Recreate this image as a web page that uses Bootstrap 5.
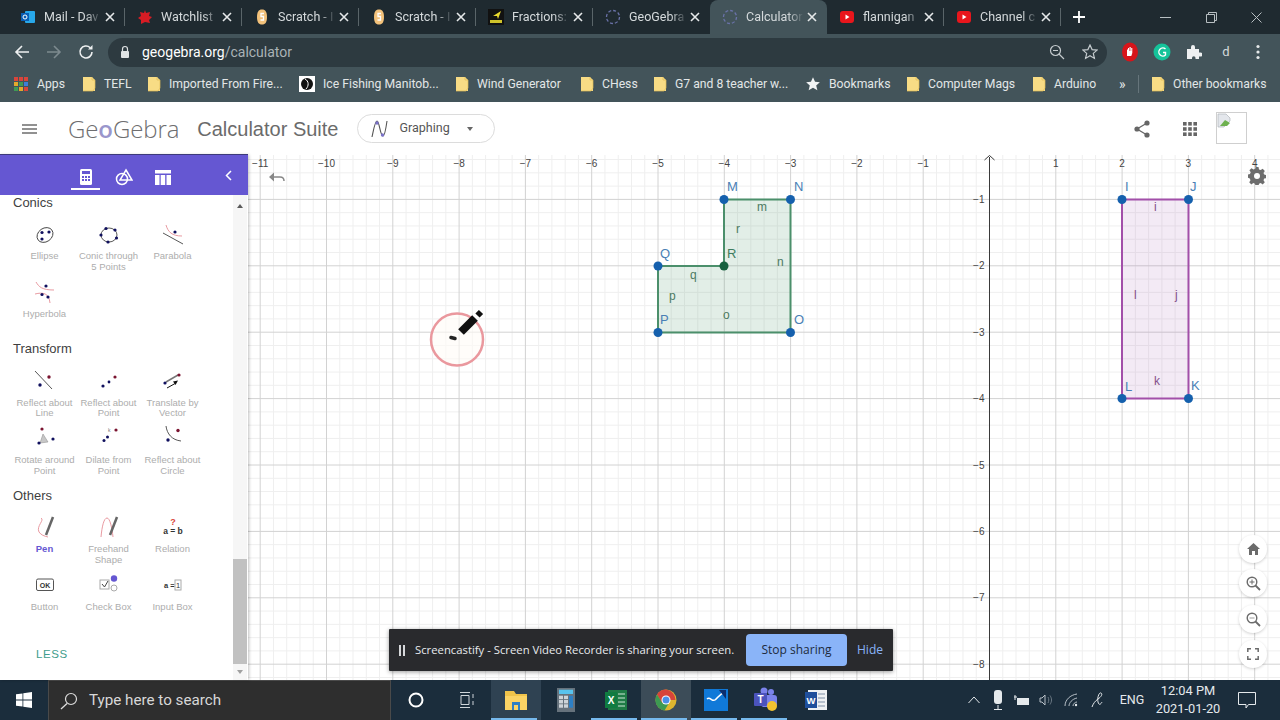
<!DOCTYPE html>
<html lang="en">
<head>
<meta charset="UTF-8">
<title>GeoGebra Calculator Suite</title>
<link rel="stylesheet" href="https://cdn.jsdelivr.net/npm/bootstrap@5.3.0/dist/css/bootstrap.min.css">
<style>
html, body { margin: 0; height: 720px; overflow: hidden; background: #fff; }
body { font-family: Roboto, "Liberation Sans", sans-serif; width: 1280px; }
/* browser chrome */
.tab-strip { height: 34px; background: #1f2a30; padding-left: 8px; }
.tab-cell { width: 117px; flex: none; height: 34px; padding-left: 12px; color: #d5dadc; font-size: 12.5px; border-radius: 8px 8px 0 0; position: relative; }
.tab-cell.is-active { background: #43545a; }
.tab-cell.has-sep::after { content: ""; position: absolute; right: 0; top: 8px; height: 18px; width: 1px; background: #5a6569; }
.tab-fav { width: 16px; height: 16px; flex: none; display: block; }
.tab-title { width: 58px; margin-left: 8px; white-space: nowrap; overflow: hidden; -webkit-mask-image: linear-gradient(to right, #000 72%, transparent); mask-image: linear-gradient(to right, #000 72%, transparent); }
.tab-x { width: 10px; height: 10px; margin-left: 3px; flex: none; }
.new-tab { margin-left: 11px; flex: none; }
.win-btns { margin-left: auto; width: 102px; margin-right: 18px; }
.addr-row { height: 36px; background: #43545a; padding-left: 13px; }
.nav-ico { width: 18px; height: 18px; flex: none; }
.nav-ico + .nav-ico { margin-left: 14px; }
.addr-pill { width: 999px; height: 29px; background: #2d3a40; border-radius: 15px; margin-left: 13px; padding: 0 9px 0 11px; color: #fff; font-size: 14px; flex: none; }
.addr-pill span { color: #aab3b7; }
.addr-text { margin-left: 11px; }
.star-ico { margin-left: 17px; }
.ext-row { margin-left: 7px; display: grid; grid-template-columns: repeat(5, 32px); justify-items: center; align-items: center; color: #d5dadc; font-size: 13px; }
.marks-row { height: 32px; background: #43545a; color: #e2e6e7; font-size: 12.2px; padding: 0 0 4px 13px; white-space: nowrap; display: grid; grid-template-columns: 67px 65px 154px 154px 125px 73px 154px 99px 126px 85px 23px 11px 1fr; align-items: center; }
.mark-item { gap: 8px; height: 16px; line-height: 16px; }
.mark-item svg { flex: none; }
.mark-more { font-size: 14px; padding-left: 4px; }
.mark-sep { width: 1px; height: 18px; background: #66757b; }
/* geogebra header */
.gg-head { height: 53px; background: #fff; color: #666; }
.gg-burger { margin-left: 22px; flex: none; }
.gg-logo { font-family: "Open Sans", Roboto, sans-serif; font-weight: 300; font-size: 24px; color: #6e6e70; margin-left: 31px; letter-spacing: -.1px; line-height: 1; }
.gg-logo b { font-weight: 600; color: #9a96cc; }
.gg-suite { font-family: "Liberation Sans", sans-serif; font-size: 20px; color: #6b6b6b; margin-left: 18px; }
.mode-pill { width: 138px; height: 29px; margin-left: 19px; border: 1px solid #dcdcdc; border-radius: 15px; font-size: 12.5px; color: #555; padding: 0 0 0 13px; background: #fff; }
.mode-label { margin-left: 10px; }
.mode-caret { width: 0; height: 0; border: 3.5px solid transparent; border-top: 4px solid #666; border-bottom: 0; margin-left: 17px; }
.grid-ico { margin-left: 33px; }
.broken-box { width: 31px; height: 32px; border: 1px solid #cfcfcf; margin-left: 19px; margin-right: 33px; margin-top: -2px; }
/* app area */
.app-main { height: 525px; }
.side-panel { width: 248px; flex: none; background: #fff; box-shadow: 1px 0 3px rgba(0,0,0,.25); z-index: 2; }
.side-tabs { height: 40px; background: #6557d2; box-shadow: 0 -1px 0 #3d3a7a; padding-left: 71px; padding-right: 16px; flex: none; }
.side-tab { width: 29px; height: 40px; padding-top: 4px; position: relative; }
.side-tab + .side-tab { margin-left: 9.5px; }
.side-tab.is-on::after { content: ""; position: absolute; left: 0; right: 0; bottom: 5px; height: 2px; background: #fff; }
.side-back { margin-left: auto; padding-top: 1px; }
.side-body { height: 485px; }
.tool-scroll { width: 233px; overflow: hidden; padding-left: 12.5px; }
.tool-head { font-family: "Liberation Sans", sans-serif; font-size: 13px; line-height: 18px; height: 18px; color: #3f3f3f; margin: 4px 0 9.5px .5px; }
.tool-head.first { margin-top: -1.5px; }
.tool-grid { display: grid; grid-template-columns: repeat(3, 64px); grid-auto-rows: 57.5px; }
.tool-cell { text-align: center; font-family: "Liberation Sans", sans-serif; font-size: 9.5px; line-height: 10.7px; color: #adadad; }
.tool-cell svg { display: block; margin: 0 auto 2px; width: 32px; height: 28px; }
.tool-cell svg text { font-family: "Liberation Sans", sans-serif; }
.tool-cell.is-on { color: #6557d2; font-weight: 700; }
.less-link { font-family: "Liberation Sans", sans-serif; font-size: 11.5px; letter-spacing: .6px; color: #3f9d8c; margin: 17.5px 0 0 23.5px; line-height: 14px; }
.scroll-rail { width: 14px; background: #f6f6f6; position: relative; }
.scroll-thumb { position: absolute; top: 364px; left: 0; right: 0; height: 105px; background: #c1c1c1; }
.rail-up, .rail-down { position: absolute; left: 4px; width: 0; height: 0; border: 3.5px solid transparent; }
.rail-up { top: 9px; border-bottom: 4px solid #5a5a5a; border-top: 0; }
.rail-down { bottom: 6px; border-top: 4px solid #a0a0a0; border-bottom: 0; }
.graph-area { position: relative; flex: 1 1 auto; background: #fff; }
.graph-svg { display: block; width: 1032px; height: 525px; }
.graph-svg text { font-family: "Liberation Sans", sans-serif; }
.axis-num { font-size: 10px; fill: #444; }
.pt-name { font-size: 13px; fill: #4a7fb5; }
.pt-inner { fill: #3f7d60; }
.seg-green { font-size: 12px; fill: #4d7a62; }
.seg-purple { font-size: 12px; fill: #84508a; }
.undo-ico { position: absolute; left: 20px; top: 16px; }
.gear-ico { position: absolute; left: 1000px; top: 12px; }
.float-btn { position: absolute; left: 991px; width: 28px; height: 28px; border-radius: 50%; background: #fff; box-shadow: 0 1px 3px rgba(0,0,0,.18); }
.fb-home { top: 380px; }
.fb-in { top: 414px; }
.fb-out { top: 450px; }
.fb-full { top: 485px; }
.share-bar { position: absolute; left: 141px; top: 474px; width: 504px; height: 42px; background: #292a2d; color: #e8eaed; font-family: "Open Sans", Roboto, sans-serif; font-size: 11.3px; box-shadow: 0 1px 4px rgba(0,0,0,.4); border-radius: 1px; padding-left: 10px; }
.share-msg { margin-left: 10px; width: 321px; white-space: nowrap; }
.share-stop { width: 101px; height: 32px; background: #8ab4f8; color: #202b3d; border: 0; border-radius: 4px; padding: 0; margin-left: 10px; font-size: 12px; font-weight: 500; font-family: inherit; }
.share-hide { color: #8ab4f8; margin-left: 10px; font-size: 12px; }
/* taskbar */
.task-bar { height: 40px; background: #1b2d3c; color: #e5e9ec; }
.task-start { width: 48px; padding-right: 0; }
.task-search { width: 343px; height: 40px; background: #2e2e2e; border: 1px solid #4a4a4a; border-bottom: 0; color: #d8d8d8; font-size: 15.2px; padding-left: 11px; }
.task-search span { margin-left: 11px; }
.task-slot { width: 50px; height: 40px; position: relative; flex: none; }
.task-slot.is-open::after { content: ""; position: absolute; left: 0; right: 4px; bottom: 0; height: 2px; background: #76b9ed; }
.task-slot.is-open.is-lit { background: #2f4252; }
.task-slot.is-here { background: #3c4c58; }
.tray-area { margin-left: auto; padding-right: 12px; }
.tray-ico { width: 24px; height: 40px; flex: none; }
.tray-ico.wide { width: 26.5px; }
.tray-lang { width: 39px; padding-left: 3px; text-align: center; font-size: 12.5px; }
.tray-time { width: 76px; text-align: center; font-size: 12.8px; line-height: 18px; }
.tray-note { width: 42px; height: 40px; }
</style>
</head>
<body>
<svg width="0" height="0" class="position-absolute">
  <symbol id="ico-x" viewBox="0 0 10 10"><path d="M1 1l8 8M9 1l-8 8" stroke="#e6e9ea" stroke-width="1.6"/></symbol>
  <symbol id="ico-folder" viewBox="0 0 16 16"><path d="M3 1h9l3 3v11H3z" fill="#f8dc85"/><path d="M12 1v3h3v8l-2 3H3" fill="none" stroke="#e2bd58" stroke-width=".7"/></symbol>
  <symbol id="ico-yt" viewBox="0 0 16 16"><rect x="1" y="2" width="14" height="12" rx="3" fill="#e8161c"/><path d="M6.5 5.5l4 2.5-4 2.5z" fill="#fff"/></symbol>
  <symbol id="ico-scratch" viewBox="0 0 16 16"><path d="M8 .5c3.5 0 5 2.5 5 7.5s-1.500 7.500-5 7.500S3 13 3 8 4.500.5 8 .5z" fill="#f3c27b"/><path d="M10 4.500H7v3h2.500v3.500H6.500" fill="none" stroke="#fff" stroke-width="1.300"/></symbol>
  <symbol id="ico-gg" viewBox="0 0 16 16"><circle cx="8" cy="8" r="6.500" fill="none" stroke="#6a72a8" stroke-width="1.300" stroke-dasharray="3 2"/></symbol>
</svg>

<!-- Tabs -->
<div class="tab-strip d-flex align-items-center">
  <div class="tab-cell has-sep d-flex align-items-center"><svg class="tab-fav" viewBox="0 0 16 16"><rect x="5" y="2" width="10" height="12" rx="1" fill="#28a8ea"/><rect x="1" y="4" width="8" height="8" fill="#0a5fb4"/><circle cx="5" cy="8" r="2" fill="none" stroke="#fff"/></svg><div class="tab-title">Mail - Dav</div><svg class="tab-x"><use href="#ico-x"/></svg></div>
  <div class="tab-cell has-sep d-flex align-items-center"><svg class="tab-fav" viewBox="0 0 16 16"><path d="M8 1l1 3 4-1-1 4 3 1-3 3 1 3-5-1-4 2 0-4-3-2 3-2-1-4 4 1z" fill="#d81c24"/></svg><div class="tab-title">Watchlist</div><svg class="tab-x"><use href="#ico-x"/></svg></div>
  <div class="tab-cell has-sep d-flex align-items-center"><svg class="tab-fav"><use href="#ico-scratch"/></svg><div class="tab-title">Scratch - I</div><svg class="tab-x"><use href="#ico-x"/></svg></div>
  <div class="tab-cell has-sep d-flex align-items-center"><svg class="tab-fav"><use href="#ico-scratch"/></svg><div class="tab-title">Scratch - I</div><svg class="tab-x"><use href="#ico-x"/></svg></div>
  <div class="tab-cell has-sep d-flex align-items-center"><svg class="tab-fav" viewBox="0 0 16 16"><rect width="16" height="16" fill="#111"/><path d="M5 7l8-5-3 8-1-3z" fill="#e8d92e"/><rect x="2" y="11" width="12" height="3" fill="#cfc32a"/></svg><div class="tab-title">Fractions:</div><svg class="tab-x"><use href="#ico-x"/></svg></div>
  <div class="tab-cell d-flex align-items-center"><svg class="tab-fav"><use href="#ico-gg"/></svg><div class="tab-title">GeoGebra</div><svg class="tab-x"><use href="#ico-x"/></svg></div>
  <div class="tab-cell is-active d-flex align-items-center"><svg class="tab-fav"><use href="#ico-gg"/></svg><div class="tab-title">Calculator</div><svg class="tab-x"><use href="#ico-x"/></svg></div>
  <div class="tab-cell has-sep d-flex align-items-center"><svg class="tab-fav"><use href="#ico-yt"/></svg><div class="tab-title">flannigan</div><svg class="tab-x"><use href="#ico-x"/></svg></div>
  <div class="tab-cell has-sep d-flex align-items-center"><svg class="tab-fav"><use href="#ico-yt"/></svg><div class="tab-title">Channel c</div><svg class="tab-x"><use href="#ico-x"/></svg></div>
  <svg class="new-tab" width="14" height="14" viewBox="0 0 14 14"><path d="M7 1v12M1 7h12" stroke="#fff" stroke-width="1.800"/></svg>
  <div class="win-btns d-flex justify-content-between align-items-center">
    <svg width="11" height="11" viewBox="0 0 11 11"><path d="M0 5.500h11" stroke="#b8bfc2"/></svg>
    <svg width="11" height="11" viewBox="0 0 11 11"><path d="M.5 2.500h8v8h-8zM2.500 2.500v-2h8v8h-2" fill="none" stroke="#b8bfc2"/></svg>
    <svg width="11" height="11" viewBox="0 0 11 11"><path d="M.5.500l10 10M10.500.500l-10 10" stroke="#b8bfc2"/></svg>
  </div>
</div>

<!-- Address bar -->
<div class="addr-row d-flex align-items-center">
  <svg class="nav-ico" viewBox="0 0 18 18"><path d="M16 9H3M9 3L3 9l6 6" fill="none" stroke="#eef0f1" stroke-width="1.600"/></svg>
  <svg class="nav-ico" viewBox="0 0 18 18"><path d="M2 9h13M9 3l6 6-6 6" fill="none" stroke="#7d8a8f" stroke-width="1.600"/></svg>
  <svg class="nav-ico" viewBox="0 0 18 18"><path d="M15 9a6 6 0 1 1-1.800-4.300" fill="none" stroke="#eef0f1" stroke-width="1.600"/><path d="M15.500 2v4.500H11z" fill="#eef0f1"/></svg>
  <div class="addr-pill d-flex align-items-center">
    <svg width="12" height="14" viewBox="0 0 12 14"><rect x="2" y="6" width="8" height="7" rx="1" fill="#dfe3e4"/><path d="M3.500 6V4a2.500 2.500 0 0 1 5 0v2" fill="none" stroke="#dfe3e4" stroke-width="1.200"/></svg>
    <div class="addr-text flex-grow-1">geogebra.org<span>/calculator</span></div>
    <svg width="16" height="16" viewBox="0 0 16 16"><circle cx="6.500" cy="6.500" r="5" fill="none" stroke="#c5cbce" stroke-width="1.200"/><path d="M10 10l5 5M4 6.500h5" stroke="#c5cbce" stroke-width="1.200"/></svg>
    <svg class="star-ico" width="16" height="16" viewBox="0 0 16 16"><path d="M8 1l2.100 4.600 5 .5-3.800 3.300 1.100 5L8 11.800l-4.400 2.600 1.100-5L.9 6.100l5-.5z" fill="none" stroke="#c5cbce" stroke-width="1.200"/></svg>
  </div>
  <div class="ext-row">
    <svg width="18" height="20" viewBox="0 0 18 20"><ellipse cx="9" cy="10" rx="8" ry="9.500" fill="#d7141a"/><path d="M6 14V7.500h1V6h1v3h.5V5h1.200v4h.5V6h1.100v5l-1 3z" fill="#fff"/></svg>
    <svg width="18" height="18" viewBox="0 0 18 18"><circle cx="9" cy="9" r="8.500" fill="#15c39a"/><path d="M12.500 6a4 4 0 1 0 0 6V9.500H10" fill="none" stroke="#fff" stroke-width="1.400"/></svg>
    <svg width="16" height="16" viewBox="0 0 16 16"><path d="M1 5h4V3a2 2 0 0 1 4 0v2h4v3.500h1.500a2 2 0 0 1 0 4H13V15H9.500v-1a1.700 1.700 0 0 0-3.500 0v1H1z" fill="#eef0f1"/></svg>
    <span>d</span>
    <svg width="4" height="16" viewBox="0 0 4 16"><circle cx="2" cy="2.500" r="1.600" fill="#e6e9ea"/><circle cx="2" cy="8" r="1.600" fill="#e6e9ea"/><circle cx="2" cy="13.500" r="1.600" fill="#e6e9ea"/></svg>
  </div>
</div>

<!-- Bookmarks -->
<div class="marks-row">
  <div class="mark-item d-flex"><svg width="16" height="16" viewBox="-1 -1 16 16"><rect width="4" height="4" fill="#d9453b"/><rect x="5" width="4" height="4" fill="#d9453b"/><rect x="10" width="4" height="4" fill="#d9453b"/><rect y="5" width="4" height="4" fill="#e3a92c"/><rect x="5" y="5" width="4" height="4" fill="#3f9a55"/><rect x="10" y="5" width="4" height="4" fill="#3e7fd8"/><rect y="10" width="4" height="4" fill="#3f9a55"/><rect x="5" y="10" width="4" height="4" fill="#e3a92c"/><rect x="10" y="10" width="4" height="4" fill="#d9453b"/></svg>Apps</div>
  <div class="mark-item d-flex"><svg width="16" height="16"><use href="#ico-folder"/></svg>TEFL</div>
  <div class="mark-item d-flex"><svg width="16" height="16"><use href="#ico-folder"/></svg>Imported From Fire...</div>
  <div class="mark-item d-flex"><svg width="16" height="16" viewBox="0 0 16 16"><rect width="16" height="16" fill="#fff"/><circle cx="8" cy="8" r="6" fill="#111"/><path d="M6 3c4 2 4 7 1 10" stroke="#fff" fill="none"/></svg>Ice Fishing Manitob...</div>
  <div class="mark-item d-flex"><svg width="16" height="16"><use href="#ico-folder"/></svg>Wind Generator</div>
  <div class="mark-item d-flex"><svg width="16" height="16"><use href="#ico-folder"/></svg>CHess</div>
  <div class="mark-item d-flex"><svg width="16" height="16"><use href="#ico-folder"/></svg>G7 and 8 teacher w...</div>
  <div class="mark-item d-flex"><svg width="16" height="16" viewBox="-1 -1 18 18"><path d="M8 .5l2.300 5 5.400.5-4.100 3.600 1.300 5.400L8 12.200 3.100 15l1.300-5.400L.3 6l5.400-.5z" fill="#f2f4f5"/></svg>Bookmarks</div>
  <div class="mark-item d-flex"><svg width="16" height="16"><use href="#ico-folder"/></svg>Computer Mags</div>
  <div class="mark-item d-flex"><svg width="16" height="16"><use href="#ico-folder"/></svg>Arduino</div>
  <div class="mark-more">&raquo;</div>
  <div class="mark-sep"></div>
  <div class="mark-item d-flex"><svg width="16" height="16"><use href="#ico-folder"/></svg>Other bookmarks</div>
</div>

<!-- GeoGebra header -->
<div class="gg-head d-flex align-items-center">
  <svg class="gg-burger" width="15" height="10" viewBox="0 0 15 10"><path d="M0 1h15M0 5h15M0 9h15" stroke="#6d6d6d" stroke-width="1.400"/></svg>
  <div class="gg-logo">Ge<b>o</b>Gebra</div>
  <div class="gg-suite">Calculator Suite</div>
  <button class="mode-pill d-flex align-items-center" type="button">
    <svg width="18" height="20" viewBox="0 0 18 20"><path d="M1 18C3 9 4 2 6 2c2.500 0 3 15 6 15 1.500 0 3-8 4-15" fill="none" stroke="#555" stroke-width="1.100"/><circle cx="6" cy="4" r="1.700" fill="#7a72c8"/><circle cx="11.500" cy="16" r="1.700" fill="#7a72c8"/></svg>
    <span class="mode-label">Graphing</span>
    <span class="mode-caret"></span>
  </button>
  <div class="ms-auto d-flex align-items-center">
    <svg width="16" height="18" viewBox="0 0 16 18"><path d="M13 3L3 9l10 6" fill="none" stroke="#666" stroke-width="1.300"/><circle cx="13" cy="3" r="2.600" fill="#666"/><circle cx="3" cy="9" r="2.600" fill="#666"/><circle cx="13" cy="15" r="2.600" fill="#666"/></svg>
    <svg class="grid-ico" width="14" height="14" viewBox="0 0 14 14" fill="#666"><rect width="3.600" height="3.600"/><rect x="5.200" width="3.600" height="3.600"/><rect x="10.400" width="3.600" height="3.600"/><rect y="5.200" width="3.600" height="3.600"/><rect x="5.200" y="5.200" width="3.600" height="3.600"/><rect x="10.400" y="5.200" width="3.600" height="3.600"/><rect y="10.400" width="3.600" height="3.600"/><rect x="5.200" y="10.400" width="3.600" height="3.600"/><rect x="10.400" y="10.400" width="3.600" height="3.600"/></svg>
    <div class="broken-box"><svg class="d-block" width="15" height="15" viewBox="0 0 15 15"><path d="M1 1h8l4 4v3l-6 6H1z" fill="#e4e7ec" stroke="#b0b4ba" stroke-width=".7"/><path d="M3 13l5-6 5 3-3 3z" fill="#6eb14f"/></svg></div>
  </div>
</div>

<div class="app-main d-flex">
  <!-- Tools panel -->
  <div class="side-panel d-flex flex-column">
    <div class="side-tabs d-flex align-items-center">
      <div class="side-tab is-on d-flex align-items-center justify-content-center">
        <svg width="12" height="16" viewBox="0 0 12 16"><rect width="12" height="16" rx="1.500" fill="#fff"/><rect x="2" y="2" width="8" height="3" fill="#6557d2"/><g fill="#6557d2"><rect x="2" y="7" width="2" height="2"/><rect x="5" y="7" width="2" height="2"/><rect x="8" y="7" width="2" height="2"/><rect x="2" y="10" width="2" height="2"/><rect x="5" y="10" width="2" height="2"/><rect x="8" y="10" width="2" height="2"/></g></svg>
      </div>
      <div class="side-tab d-flex align-items-center justify-content-center">
        <svg width="18" height="18" viewBox="0 0 18 18"><circle cx="7" cy="11" r="5.500" fill="none" stroke="#fff" stroke-width="1.500"/><path d="M11 2l6 10H5z" fill="none" stroke="#fff" stroke-width="1.500"/></svg>
      </div>
      <div class="side-tab d-flex align-items-center justify-content-center">
        <svg width="16" height="15" viewBox="0 0 16 15" fill="#fff"><rect width="16" height="3.500"/><rect y="5" width="4.500" height="10"/><rect x="5.700" y="5" width="4.500" height="10"/><rect x="11.500" y="5" width="4.500" height="10"/></svg>
      </div>
      <svg class="side-back" width="7" height="12" viewBox="0 0 7 11"><path d="M6 1L1.500 5.500 6 10" fill="none" stroke="#fff" stroke-width="1.500"/></svg>
    </div>
    <div class="side-body d-flex">
      <div class="tool-scroll">
        <div class="tool-head first">Conics</div>
        <div class="tool-grid">
          <div class="tool-cell"><svg viewBox="0 0 32 28"><ellipse cx="16" cy="14" rx="8.500" ry="6.800" transform="rotate(-35 16 14)" fill="none" stroke="#444" stroke-width=".9"/><circle cx="20" cy="11" r="1.600" fill="#10105e"/><circle cx="13" cy="11.500" r="1.600" fill="#10105e"/><circle cx="13" cy="18" r="1.600" fill="#10105e"/></svg>Ellipse</div>
          <div class="tool-cell"><svg viewBox="0 0 32 28"><ellipse cx="16" cy="14" rx="8" ry="7" fill="none" stroke="#444" stroke-width=".9"/><circle cx="13" cy="7.500" r="1.600" fill="#10105e"/><circle cx="22" cy="9" r="1.600" fill="#10105e"/><circle cx="23.500" cy="17" r="1.600" fill="#10105e"/><circle cx="15" cy="21" r="1.600" fill="#10105e"/><circle cx="8" cy="14" r="1.600" fill="#10105e"/></svg>Conic through<br>5 Points</div>
          <div class="tool-cell"><svg viewBox="0 0 32 28"><path d="M9 4c2 7 6 11 16 11" fill="none" stroke="#e58e96" stroke-width=".9"/><path d="M6 12l20 11" stroke="#444" stroke-width=".9"/><circle cx="18" cy="11" r="1.600" fill="#10105e"/></svg>Parabola</div>
          <div class="tool-cell"><svg viewBox="0 0 32 28"><path d="M7 3c3 5 6 8 18 8M6 15c8-2 14-1 15 9" fill="none" stroke="#e58e96" stroke-width=".9"/><circle cx="17" cy="7" r="1.600" fill="#10105e"/><circle cx="13" cy="15.500" r="1.600" fill="#10105e"/><circle cx="19" cy="18" r="1.600" fill="#10105e"/></svg>Hyperbola</div>
        </div>
        <div class="tool-head">Transform</div>
        <div class="tool-grid">
          <div class="tool-cell"><svg viewBox="0 0 32 28"><path d="M6 3l17 18" stroke="#444" stroke-width=".9"/><circle cx="20" cy="9" r="1.700" fill="#7a1430"/><circle cx="11" cy="17" r="1.700" fill="#10105e"/></svg>Reflect about<br>Line</div>
          <div class="tool-cell"><svg viewBox="0 0 32 28"><circle cx="22" cy="9" r="1.600" fill="#7a1430"/><circle cx="16" cy="14" r="1.400" fill="#10105e"/><circle cx="10" cy="18" r="1.600" fill="#10105e"/></svg>Reflect about<br>Point</div>
          <div class="tool-cell"><svg viewBox="0 0 32 28"><path d="M9 14l12-7" stroke="#777" stroke-width="1.500"/><path d="M10 20l9-5" stroke="#111" stroke-width="1"/><path d="M21 12.500l-5 1 2.500 3.500z" fill="#111"/><circle cx="8" cy="15" r="1.600" fill="#10105e"/><circle cx="22" cy="7" r="1.600" fill="#7a1430"/></svg>Translate by<br>Vector</div>
          <div class="tool-cell"><svg viewBox="0 0 32 28"><circle cx="13" cy="4" r="1.600" fill="#7a1430"/><path d="M14 9l-3 9 8-1z" fill="#c7c7c7" stroke="#888" stroke-width=".5"/><circle cx="24" cy="14" r="1.600" fill="#10105e"/><circle cx="10" cy="18" r="1.600" fill="#10105e"/></svg>Rotate around<br>Point</div>
          <div class="tool-cell"><svg viewBox="0 0 32 28"><text x="15" y="6.500" font-size="5" fill="#777">k</text><circle cx="23" cy="5" r="1.600" fill="#7a1430"/><circle cx="14.500" cy="12" r="1.500" fill="#10105e"/><circle cx="11" cy="15.500" r="1.500" fill="#10105e"/></svg>Dilate from<br>Point</div>
          <div class="tool-cell"><svg viewBox="0 0 32 28"><path d="M9 1c1 8 6 14 15 15" fill="none" stroke="#444" stroke-width=".9"/><circle cx="21" cy="5.500" r="1.700" fill="#7a1430"/><circle cx="11" cy="15" r="1.700" fill="#10105e"/></svg>Reflect about<br>Circle</div>
        </div>
        <div class="tool-head">Others</div>
        <div class="tool-grid">
          <div class="tool-cell is-on"><svg viewBox="0 0 32 28"><path d="M12 4c4 2-5 8-2 14 2 3 5 4 9 5" fill="none" stroke="#e58e96" stroke-width=".9"/><path d="M24 3l-7 18" stroke="#666" stroke-width="2.500"/></svg>Pen</div>
          <div class="tool-cell"><svg viewBox="0 0 32 28"><path d="M8 23C9 12 11 4 14 4c3 0 5 10 6 19" fill="none" stroke="#e58e96" stroke-width=".9"/><path d="M24 3l-7 18" stroke="#666" stroke-width="2.500"/></svg>Freehand<br>Shape</div>
          <div class="tool-cell"><svg viewBox="0 0 32 28"><text x="16" y="11" text-anchor="middle" font-size="9" font-weight="700" fill="#d9453b">?</text><text x="16" y="20" text-anchor="middle" font-size="8.500" font-weight="700" fill="#333">a = b</text></svg>Relation</div>
          <div class="tool-cell"><svg viewBox="0 0 32 28"><rect x="7.500" y="7" width="17" height="11.500" rx="1.500" fill="none" stroke="#555"/><text x="16" y="15.800" text-anchor="middle" font-size="7" font-weight="700" fill="#333">OK</text></svg>Button</div>
          <div class="tool-cell"><svg viewBox="0 0 32 28"><rect x="7" y="8" width="9" height="9" fill="none" stroke="#aaa"/><path d="M9 12l2.500 3 3.500-6" fill="none" stroke="#444"/><circle cx="21" cy="6.500" r="3.200" fill="#6557d2"/><circle cx="21" cy="16" r="3" fill="none" stroke="#aaa"/></svg>Check Box</div>
          <div class="tool-cell"><svg viewBox="0 0 32 28"><text x="7" y="16" font-size="7.500" font-weight="700" fill="#333">a =</text><rect x="18" y="8" width="6" height="10" fill="none" stroke="#aaa"/><text x="21" y="16" text-anchor="middle" font-size="7.500" fill="#333">1</text></svg>Input Box</div>
        </div>
        <div class="less-link">LESS</div>
      </div>
      <div class="scroll-rail"><span class="rail-up"></span><div class="scroll-thumb"></div><span class="rail-down"></span></div>
    </div>
  </div>

  <!-- Graphing view -->
  <div class="graph-area">
    <svg class="graph-svg" id="graph" viewBox="248 155 1032 525">
      <g id="grid-lines"></g>
      <polygon points="724,199.500 790.500,199.500 790.500,332.500 658,332.500 658,266 724,266" fill="#5d9e7a" fill-opacity=".18" stroke="#4b8f6b" stroke-width="2"/>
      <rect x="1122" y="199.500" width="66.500" height="199" fill="#a65cb0" fill-opacity=".13" stroke="#a24fa9" stroke-width="2"/>
      <g fill="#1560ad">
        <circle cx="724" cy="199.500" r="4.500"/><circle cx="790.500" cy="199.500" r="4.500"/><circle cx="790.500" cy="332.500" r="4.500"/><circle cx="658" cy="332.500" r="4.500"/><circle cx="658" cy="266" r="4.500"/>
        <circle cx="1122" cy="199.500" r="4.500"/><circle cx="1188.500" cy="199.500" r="4.500"/><circle cx="1188.500" cy="398.500" r="4.500"/><circle cx="1122" cy="398.500" r="4.500"/>
      </g>
      <circle cx="724" cy="266" r="4.500" fill="#17613f"/>
      <g class="pt-name">
        <text x="727" y="191">M</text><text x="794" y="191">N</text><text x="660" y="258">Q</text><text x="727" y="258" class="pt-inner">R</text><text x="660" y="324">P</text><text x="794" y="324">O</text>
        <text x="1125" y="191">I</text><text x="1190" y="191">J</text><text x="1125" y="391">L</text><text x="1191" y="390">K</text>
      </g>
      <g class="seg-green">
        <text x="757" y="211">m</text><text x="736" y="233">r</text><text x="777" y="266">n</text><text x="690" y="279">q</text><text x="669" y="300">p</text><text x="723" y="319">o</text>
      </g>
      <g class="seg-purple">
        <text x="1154" y="211">i</text><text x="1134" y="299">l</text><text x="1175" y="299">j</text><text x="1154" y="385">k</text>
      </g>
      <!-- pen cursor -->
      <circle cx="457" cy="339.500" r="26" fill="#fffcf6" fill-opacity=".6" stroke="#ea989e" stroke-width="2.500"/>
      <path d="M461 332l14-14" stroke="#111" stroke-width="8"/>
      <path d="M477.500 315.500l3.500-3.500" stroke="#111" stroke-width="6"/>
      <path d="M451 337.500l4 1" stroke="#222" stroke-width="3.500" stroke-linecap="round"/>
    </svg>

    <svg class="undo-ico" width="18" height="12" viewBox="0 0 18 12"><path d="M3 6h9c3 0 4 2 4 4" fill="none" stroke="#888" stroke-width="1.500"/><path d="M6 1.500L1 6l5 4.500z" fill="#888"/></svg>
    <svg class="gear-ico" width="18" height="18" viewBox="0 0 18 18"><path d="M7.500 0h3l.5 2.400 1.700.7 2-1.300 2.100 2.100-1.300 2 .7 1.700 2.400.5v3l-2.400.5-.7 1.700 1.300 2-2.100 2.100-2-1.300-1.700.7-.5 2.400h-3l-.5-2.400-1.700-.7-2 1.300-2.100-2.100 1.300-2-.7-1.700L-.4 10.500v-3l2.400-.5.7-1.700-1.300-2 2.100-2.100 2 1.300 1.700-.7z" fill="#6d6d6d"/><circle cx="9" cy="9" r="3" fill="#fff"/></svg>

    <div class="float-btn fb-home d-flex align-items-center justify-content-center"><svg width="13" height="12" viewBox="0 0 13 12"><path d="M6.500 0L13 6h-2v6H8V8H5v4H2V6H0z" fill="#6b6b6b"/></svg></div>
    <div class="float-btn fb-in d-flex align-items-center justify-content-center"><svg width="15" height="15" viewBox="0 0 15 15"><circle cx="6" cy="6" r="4.800" fill="none" stroke="#6b6b6b" stroke-width="1.400"/><path d="M9.500 9.500L14 14" stroke="#6b6b6b" stroke-width="1.800"/><path d="M3.500 6h5M6 3.500v5" stroke="#6b6b6b"/></svg></div>
    <div class="float-btn fb-out d-flex align-items-center justify-content-center"><svg width="15" height="15" viewBox="0 0 15 15"><circle cx="6" cy="6" r="4.800" fill="none" stroke="#6b6b6b" stroke-width="1.400"/><path d="M9.500 9.500L14 14" stroke="#6b6b6b" stroke-width="1.800"/><path d="M3.500 6h5" stroke="#9b9b9b"/></svg></div>
    <div class="float-btn fb-full d-flex align-items-center justify-content-center"><svg width="12" height="12" viewBox="0 0 12 12"><path d="M.8 4V.8H4M8 .8h3.200V4M11.200 8v3.200H8M4 11.200H.8V8" fill="none" stroke="#6b6b6b" stroke-width="1.500"/></svg></div>

    <div class="share-bar d-flex align-items-center">
      <svg width="6" height="11" viewBox="0 0 6 11"><path d="M1 0v11M5 0v11" stroke="#e8eaed" stroke-width="1.800"/></svg>
      <span class="share-msg">Screencastify - Screen Video Recorder is sharing your screen.</span>
      <button class="share-stop" type="button">Stop sharing</button>
      <span class="share-hide">Hide</span>
    </div>
  </div>
</div>

<!-- Windows taskbar -->
<div class="task-bar d-flex align-items-center">
  <div class="task-start d-flex align-items-center justify-content-center"><svg width="16" height="16" viewBox="0 0 16 16"><path d="M0 2.300l6.500-.9v6.200H0zM7.300 1.300L16 0v7.600H7.300zM0 8.400h6.500v6.200L0 13.700zM7.300 8.400H16V16l-8.700-1.300z" fill="#fff"/></svg></div>
  <div class="task-search d-flex align-items-center">
    <svg width="18" height="18" viewBox="0 0 18 18"><circle cx="11" cy="7" r="5.500" fill="none" stroke="#ddd" stroke-width="1.200"/><path d="M7 11.500L1 17" stroke="#ddd" stroke-width="1.300"/></svg>
    <span>Type here to search</span>
  </div>
  <div class="task-slot d-flex align-items-center justify-content-center"><svg width="16" height="16" viewBox="0 0 16 16"><circle cx="8" cy="8" r="6.500" fill="none" stroke="#fff" stroke-width="2"/></svg></div>
  <div class="task-slot d-flex align-items-center justify-content-center"><svg width="17" height="16" viewBox="0 0 17 16"><path d="M2 .500h10M2 15.500h10M3 3.500h8v9H3zM15 2v4M15 9v4" fill="none" stroke="#cfd5da"/></svg></div>
  <div class="task-slot is-open is-lit d-flex align-items-center justify-content-center"><svg width="22" height="20" viewBox="0 0 22 20"><path d="M0 1h9l2 3h11v14H0z" fill="#f0c34a"/><rect y="6" width="22" height="14" fill="#fbd364"/><rect x="7" y="12" width="8" height="8" fill="#2d7fc4"/><rect x="9" y="15" width="4" height="5" fill="#fbd364"/></svg></div>
  <div class="task-slot d-flex align-items-center justify-content-center"><svg width="18" height="24" viewBox="0 0 18 28" preserveAspectRatio="none"><rect width="18" height="28" fill="#66727c"/><rect x="2" y="2" width="14" height="5" fill="#58c3ee"/><g fill="#cdd3d8"><rect x="2" y="9" width="4" height="4"/><rect x="7" y="9" width="4" height="4"/><rect x="2" y="14" width="4" height="4"/><rect x="7" y="14" width="4" height="4"/><rect x="2" y="19" width="4" height="4"/><rect x="7" y="19" width="4" height="4"/></g><rect x="12" y="9" width="4" height="14" fill="#2d7fc4"/></svg></div>
  <div class="task-slot is-open d-flex align-items-center justify-content-center"><svg width="22" height="22" viewBox="0 0 22 22"><rect x="3" y="1" width="19" height="20" fill="#1f7a46"/><path d="M13 5h7M13 9h7M13 13h7M13 17h7" stroke="#cfe6d8"/><rect y="3" width="12" height="16" fill="#107c41"/><text x="6" y="15" text-anchor="middle" font-size="10" font-weight="700" fill="#fff" font-family="Liberation Sans">X</text></svg></div>
  <div class="task-slot is-here is-open d-flex align-items-center justify-content-center"><svg width="22" height="22" viewBox="0 0 22 22"><circle cx="11" cy="11" r="10.500" fill="#ddb52f"/><path d="M11 .500a10.500 10.500 0 0 0-9 5l5 9 4-3.500h9.500a10.500 10.500 0 0 0-9.500-10.500z" fill="#d7443a"/><path d="M2 5.500a10.500 10.500 0 0 0 7.500 16L14 14l-3 1-4-1.500z" fill="#3d9a52"/><circle cx="11" cy="11" r="4.500" fill="#fff"/><circle cx="11" cy="11" r="3.500" fill="#4a8fe7"/></svg></div>
  <div class="task-slot is-open d-flex align-items-center justify-content-center"><svg width="24" height="22" viewBox="0 0 24 22"><rect width="24" height="22" fill="#1079d8"/><path d="M3 10c3-3 5 3 8 1s4-6 10-8" fill="none" stroke="#fff" stroke-width="1.500"/><path d="M15 1l7 9V1z" fill="#0c2e6e"/></svg></div>
  <div class="task-slot is-open d-flex align-items-center justify-content-center"><svg width="26" height="26" viewBox="0 0 26 26"><circle cx="18" cy="5" r="3" fill="#7b83eb"/><circle cx="11" cy="4" r="3.500" fill="#7b83eb"/><rect x="8" y="8" width="16" height="12" rx="3" fill="#7b83eb"/><rect x="1" y="6" width="13" height="13" rx="1" fill="#4b53bc"/><text x="7.500" y="16" text-anchor="middle" font-size="10" font-weight="700" fill="#fff" font-family="Liberation Sans">T</text><circle cx="19" cy="19" r="5" fill="#f2c230"/></svg></div>
  <div class="task-slot d-flex align-items-center justify-content-center"><svg width="22" height="22" viewBox="0 0 22 22"><rect x="3" y="1" width="19" height="20" fill="#eef1f4"/><path d="M13 5h7M13 9h7M13 13h7M13 17h7" stroke="#7e8fa6"/><rect y="3" width="12" height="16" fill="#1f4f9c"/><text x="6" y="15" text-anchor="middle" font-size="9.500" font-weight="700" fill="#fff" font-family="Liberation Sans">W</text></svg></div>

  <div class="tray-area d-flex align-items-center">
    <div class="tray-ico d-flex align-items-center justify-content-center"><svg width="12" height="8" viewBox="0 0 12 8"><path d="M.5 7L6 1l5.500 6" fill="none" stroke="#e5e9ec"/></svg></div>
    <div class="tray-ico d-flex align-items-center justify-content-center"><svg width="10" height="20" viewBox="0 0 10 20"><rect x="1" y="0" width="8" height="14" rx="3" fill="#e5e9ec"/><path d="M5 15v4M1 19.500h8" stroke="#e5e9ec"/></svg></div>
    <div class="tray-ico d-flex align-items-center justify-content-center"><svg width="16" height="13" viewBox="0 0 16 13"><rect x="3" y="4" width="12" height="7" fill="#e5e9ec"/><path d="M1 1v5M0 3h3" stroke="#e5e9ec"/></svg></div>
    <div class="tray-ico d-flex align-items-center justify-content-center"><svg width="14" height="12" viewBox="0 0 14 12"><path d="M1 4h2l3-3v10L3 8H1z" fill="none" stroke="#b8c0c7"/><path d="M9 3c1 2 1 4 0 6M11 1.500c2 3 2 6 0 9" fill="none" stroke="#6d7a85"/></svg></div>
    <div class="tray-ico wide d-flex align-items-center justify-content-center"><svg width="14" height="14" viewBox="0 0 14 14"><path d="M1 13C1 7 6 2 13 1M5 13c0-3 3-7 8-8M9 13c0-2 2-4 4-4" fill="none" stroke="#b8c0c7"/><circle cx="12" cy="12" r="1.200" fill="#e5e9ec"/></svg></div>
    <div class="tray-ico wide d-flex align-items-center justify-content-center"><svg width="14" height="16" viewBox="0 0 14 16"><path d="M1 15c1-3 3-6 6-8s5-5 3-6-4 5-3 9 3 2 4 0" fill="none" stroke="#e5e9ec"/></svg></div>
    <div class="tray-lang">ENG</div>
    <div class="tray-time">12:04 PM<br>2021-01-20</div>
    <div class="tray-note d-flex align-items-center justify-content-center"><svg width="18" height="17" viewBox="0 0 18 17"><path d="M.5.500h17v12h-7l-2.500 3.500v-3.500H.5z" fill="none" stroke="#e5e9ec"/></svg></div>
  </div>
</div>

<script>
    // Grid, axis and numbers of the graphing view, in page coordinates
    const gridLayer = document.getElementById('grid-lines');
    const ns = 'http://www.w3.org/2000/svg';
    const unitX = 66.3, unitY = 66.4, originX = 989.5, originY = 133;

    function addLine(x1, y1, x2, y2, color, width) {
        const l = document.createElementNS(ns, 'line');
        l.setAttribute('x1', x1); l.setAttribute('y1', y1);
        l.setAttribute('x2', x2); l.setAttribute('y2', y2);
        l.setAttribute('stroke', color); l.setAttribute('stroke-width', width);
        gridLayer.appendChild(l);
    }

    function addNum(x, y, label, anchor) {
        const t = document.createElementNS(ns, 'text');
        t.setAttribute('x', x); t.setAttribute('y', y);
        t.setAttribute('text-anchor', anchor);
        t.setAttribute('class', 'axis-num');
        t.textContent = label;
        gridLayer.appendChild(t);
    }

    for (let i = -60; i <= 25; i++) {
        const x = originX + i * unitX / 5;
        if (x > 248 && i % 5 !== 0) addLine(x, 155, x, 680, '#efefef', 1);
    }
    for (let i = 1; i <= 45; i++) {
        const y = originY + i * unitY / 5;
        if (y > 155 && i % 5 !== 0) addLine(248, y, 1280, y, '#efefef', 1);
    }
    for (let i = -11; i <= 4; i++) {
        const x = originX + i * unitX;
        if (i !== 0) addLine(x, 155, x, 680, '#d2d2d2', 1);
    }
    for (let i = 1; i <= 8; i++) {
        addLine(248, originY + i * unitY, 1280, originY + i * unitY, '#d2d2d2', 1);
    }
    addLine(originX, 157, originX, 680, '#3a3a3a', 1);
    addLine(originX - 5, 160, originX, 155.5, '#3a3a3a', 1);
    addLine(originX + 5, 160, originX, 155.5, '#3a3a3a', 1);

    for (let i = -11; i <= 4; i++) {
        if (i !== 0) addNum(originX + i * unitX, 166.5, (i < 0 ? '\u2212' + (-i) : i), 'middle');
    }
    for (let i = 1; i <= 8; i++) {
        addNum(originX - 5, originY + i * unitY + 3.5, '\u2212' + i, 'end');
    }
</script>
<script src="https://cdn.jsdelivr.net/npm/bootstrap@5.3.0/dist/js/bootstrap.bundle.min.js"></script>
</body>
</html>
